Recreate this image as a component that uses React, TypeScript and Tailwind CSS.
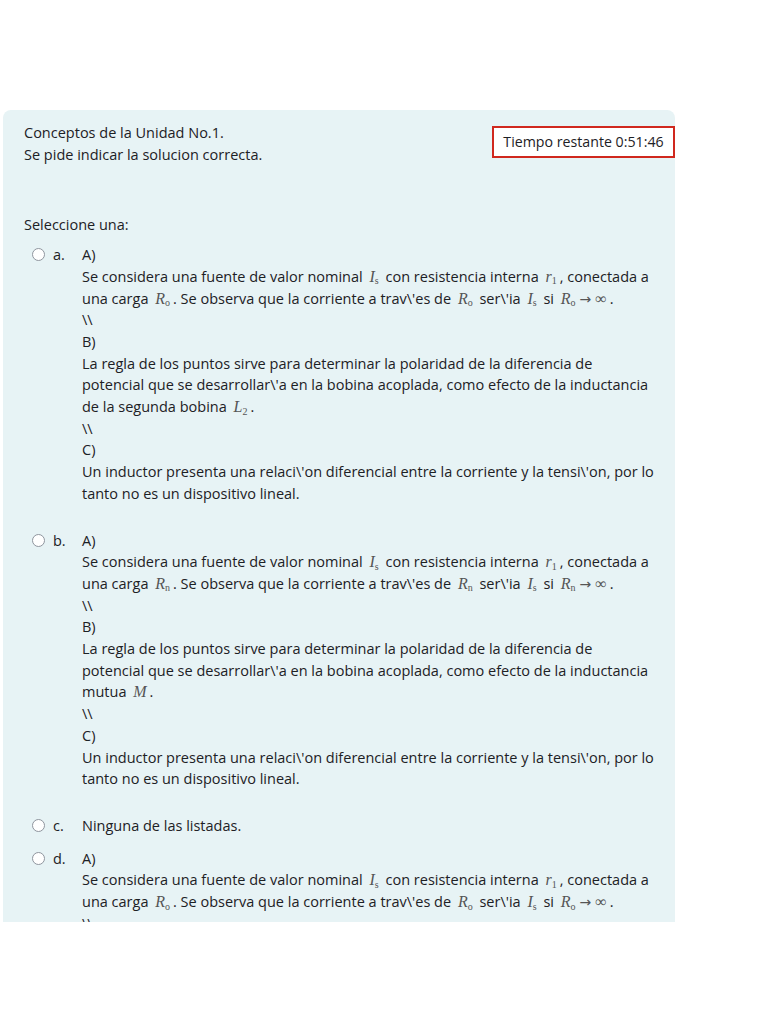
import React from "react"

const font = { fontFamily: '"Open Sans", "Noto Sans", sans-serif' }

function V({ b, s }: { b: string; s?: string }) {
  return (
    <span className="mx-[3px] whitespace-nowrap font-['Liberation_Serif',serif] text-[16px] leading-none text-[#555]">
      <i>{b}</i>
      {s && <sub className="text-[10px] not-italic">{s}</sub>}
    </span>
  )
}

function Limit({ s }: { s: string }) {
  return (
    <span className="mx-[3px] whitespace-nowrap font-['Liberation_Serif',serif] text-[16px] leading-none text-[#555]">
      <i>R</i>
      <sub className="text-[10px]">{s}</sub>
      <span className="mx-[4px] font-['DejaVu_Sans',sans-serif] text-[14px]">→</span>∞
    </span>
  )
}

function Head({ sub }: { sub: string }) {
  return (
    <>
      <div>A)</div>
      <div>
        Se considera una fuente de valor nominal <V b="I" s="s" /> con resistencia interna <V b="r" s="1" />, conectada a
      </div>
      <div>
        una carga <V b="R" s={sub} />. Se observa que la corriente a {"trav\\'es"} de <V b="R" s={sub} /> {"ser\\'ia"}{" "}
        <V b="I" s="s" /> si <Limit s={sub} />.
      </div>
      <div>{"\\\\"}</div>
    </>
  )
}

function Statement({ sub, last }: { sub: string; last: React.ReactNode }) {
  return (
    <>
      <Head sub={sub} />
      <div>B)</div>
      <div>La regla de los puntos sirve para determinar la polaridad de la diferencia de</div>
      <div>{"potencial que se desarrollar\\'a en la bobina acoplada, como efecto de la inductancia"}</div>
      <div>{last}</div>
      <div>{"\\\\"}</div>
      <div>C)</div>
      <div>{"Un inductor presenta una relaci\\'on diferencial entre la corriente y la tensi\\'on, por lo"}</div>
      <div>tanto no es un dispositivo lineal.</div>
    </>
  )
}

function Option({ label, children, long }: { label: string; children: React.ReactNode; long?: boolean }) {
  return (
    <div className={`flex mb-[11px] ${long ? "pb-[14px]" : ""}`}>
      <div className="ml-[8px] mt-[4px] h-[13px] w-[13px] shrink-0 rounded-full border border-[#8f959e] bg-white" />
      <div className="ml-[8px] w-[29px] shrink-0">{label}</div>
      <div className="whitespace-nowrap">{children}</div>
    </div>
  )
}

export default function App() {
  return (
    <div className="min-h-[1024px] bg-white pt-[110px] pl-[3px]" style={font}>
      <div className="relative h-[812px] w-[672px] overflow-hidden rounded-t-lg bg-[#e7f3f5] px-[21px] pt-[12px] text-[14.5px] leading-[21.7px] text-[#1d2125]">
        <div className="absolute right-0 top-[16px] flex h-[32px] w-[183px] items-center justify-center border-2 border-[#d0281e] bg-white text-[14.2px]">
          Tiempo restante 0:51:46
        </div>

        <div>Conceptos de la Unidad No.1.</div>
        <div>Se pide indicar la solucion correcta.</div>

        <div className="mt-[49px] mb-[8px]">Seleccione una:</div>

        <Option label="a." long>
          <Statement sub="o" last={<>de la segunda bobina <V b="L" s="2" />.</>} />
        </Option>
        <Option label="b." long>
          <Statement sub="n" last={<>mutua <V b="M" />.</>} />
        </Option>
        <Option label="c.">Ninguna de las listadas.</Option>
        <Option label="d.">
          <Head sub="o" />
        </Option>
      </div>
    </div>
  )
}
